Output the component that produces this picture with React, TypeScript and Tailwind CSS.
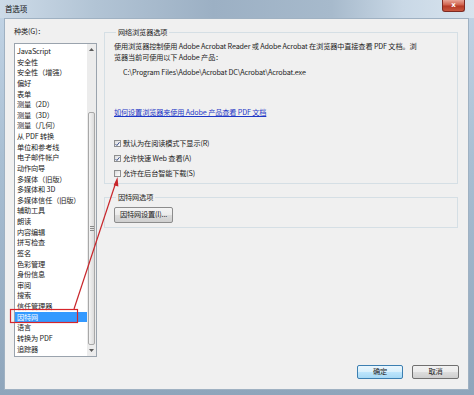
import React from "react";

const categories = [
  "JavaScript",
  "安全性",
  "安全性（增强）",
  "偏好",
  "表单",
  "测量（2D）",
  "测量（3D）",
  "测量（几何）",
  "从 PDF 转换",
  "单位和参考线",
  "电子邮件帐户",
  "动作向导",
  "多媒体（旧版）",
  "多媒体和 3D",
  "多媒体信任（旧版）",
  "辅助工具",
  "朗读",
  "内容编辑",
  "拼写检查",
  "签名",
  "色彩管理",
  "身份信息",
  "审阅",
  "搜索",
  "信任管理器",
  "因特网",
  "语言",
  "转换为 PDF",
  "追踪器",
];

const Checkbox: React.FC<{ label: string; checked?: boolean }> = ({
  label,
  checked = false,
}) => (
  <div className="h-[15px] flex items-center gap-[2px]">
    <span className="w-[7px] h-[7px] border border-[#8e8f8f] bg-[linear-gradient(135deg,#dcdcdc,#ffffff)] flex items-center justify-center">
      {checked && (
        <svg width="6" height="6" viewBox="0 0 6 6">
          <path d="M0.6 3.1 L2.3 4.8 L5.4 0.8" fill="none" stroke="#3a4f86" strokeWidth="1.2" />
        </svg>
      )}
    </span>
    <span>{label}</span>
  </div>
);

const Triangle: React.FC<{ down?: boolean }> = ({ down = false }) => (
  <svg width="5" height="3" viewBox="0 0 5 3">
    <path d={down ? "M0 0 H5 L2.5 3 Z" : "M0 3 H5 L2.5 0 Z"} fill="#5b5b5b" />
  </svg>
);

const App: React.FC = () => {
  return (
    <div className="relative w-[474px] h-[395px] overflow-hidden flex flex-col bg-[linear-gradient(180deg,#c3d5e6_0%,#a9bfd3_40%,#8ea5bb_100%)] font-['Noto_Sans_CJK_SC',sans-serif] text-[7.2px] tracking-[-0.15px] text-[#222]">
      {/* Title bar */}
      <div className="h-[18px] flex items-start justify-between pl-[5px] pr-[9px] bg-[linear-gradient(90deg,#cddbe8_0%,#b2c4d5_20%,#9cb0c4_45%,#a7bacc_70%,#c9d8e6_85%,#d8e4ee_100%)]">
        <span className="leading-[18px] text-[7.5px] text-[#111]">首选项</span>
        <div className="w-[23px] h-[12px] rounded-b-[3px] border border-t-0 border-[#7d2a22] bg-[linear-gradient(180deg,#e8a597_0%,#d0614c_45%,#b53a26_55%,#c9573f_100%)] flex items-center justify-center">
          <span className="text-white text-[7px] font-bold leading-none font-['DejaVu_Sans',sans-serif]">x</span>
        </div>
      </div>

      {/* Client area */}
      <div className="flex-1 flex pl-[4px] pr-[5px] pb-[5px]">
        <div className="flex-1 flex flex-col bg-[#f0f0f0] border border-[#9fb1c2]">
          <div className="flex pt-[5px]">
            {/* Categories */}
            <div className="ml-[9px] w-[83px] flex flex-col">
              <div className="h-[19px] leading-[15px]">种类(G)：</div>
              <div className="h-[314px] border border-[#9aa3ad] bg-white flex">
                <ul className="flex-1 pt-[2px]">
                  {categories.map((c) => (
                    <li
                      key={c}
                      className={`h-[10.63px] leading-[10.63px] pl-[2px] whitespace-nowrap ${
                        c === "因特网" ? "bg-[#3399ff] text-white" : ""
                      }`}
                    >
                      {c}
                    </li>
                  ))}
                </ul>
                {/* Scrollbar */}
                <div className="w-[9px] flex flex-col bg-[#ececec]">
                  <div className="h-[10px] flex items-center justify-center">
                    <Triangle />
                  </div>
                  <div className="flex-1 pt-[58px]">
                    <div className="h-[233px] mx-[1px] rounded-[2px] border border-[#a8a8a8] bg-[linear-gradient(90deg,#f4f4f4,#dcdcdc)] flex items-center justify-center">
                      <div className="flex flex-col gap-[1px]">
                        <div className="w-[4px] h-px bg-[#8a8a8a]" />
                        <div className="w-[4px] h-px bg-[#8a8a8a]" />
                        <div className="w-[4px] h-px bg-[#8a8a8a]" />
                      </div>
                    </div>
                  </div>
                  <div className="h-[11px] flex items-center justify-center pb-[1px]">
                    <Triangle down />
                  </div>
                </div>
              </div>
            </div>

            {/* Settings panel */}
            <div className="ml-[7px] w-[354px] flex flex-col">
              <fieldset className="border border-[#d5dfe5] pl-[9px] pb-[2px]">
                <legend className="ml-[2px] px-[2px] leading-[16px]">网络浏览器选项</legend>
                <div className="pt-[1px] leading-[11px] whitespace-nowrap">
                  <div>使用浏览器控制使用 Adobe Acrobat Reader 或 Adobe Acrobat 在浏览器中直接查看 PDF 文档。浏</div>
                  <div>览器当前可使用以下 Adobe 产品：</div>
                </div>
                <div className="mt-[4px] pl-[9px] leading-[11px]">
                  C:\Program Files\Adobe\Acrobat DC\Acrobat\Acrobat.exe
                </div>
                <div className="mt-[29px] leading-[11px] text-[#1c36c6] underline">
                  如何设置浏览器来使用 Adobe 产品查看 PDF 文档
                </div>
                <div className="mt-[18px]">
                  <Checkbox label="默认为在阅读模式下显示(R)" checked />
                  <Checkbox label="允许快速 Web 查看(A)" checked />
                  <Checkbox label="允许在后台智能下载(S)" />
                </div>
              </fieldset>

              <fieldset className="mt-[5px] border border-[#d5dfe5] pl-[9px] pb-[4px]">
                <legend className="ml-[2px] px-[2px] leading-[16px]">因特网选项</legend>
                <button className="mt-[2px] w-[59px] h-[16px] rounded-[2px] border border-[#8c8c8c] bg-[linear-gradient(180deg,#f4f4f4_0%,#ebebeb_50%,#dcdcdc_51%,#cfcfcf_100%)] leading-none">
                  因特网设置(I)...
                </button>
              </fieldset>
            </div>
          </div>

          {/* Dialog buttons */}
          <div className="mt-[8px] flex justify-end gap-[9px] pr-[9px]">
            <button className="w-[46px] h-[14px] rounded-[2px] border border-[#3c7fb1] bg-[linear-gradient(180deg,#eaf6fd_0%,#d9f0fc_50%,#bee6fd_51%,#a7d9f5_100%)] leading-none">
              确定
            </button>
            <button className="w-[47px] h-[14px] rounded-[2px] border border-[#707070] bg-[linear-gradient(180deg,#f2f2f2_0%,#ebebeb_50%,#dddddd_51%,#cfcfcf_100%)] leading-none">
              取消
            </button>
          </div>
        </div>
      </div>

      {/* Red annotation */}
      <svg className="absolute inset-0 pointer-events-none" width="474" height="395">
        <rect x="10.5" y="309.5" width="67" height="13" fill="none" stroke="#d6252b" strokeWidth="1.2" />
        <line x1="74" y1="309" x2="116" y2="182" stroke="#c8262b" strokeWidth="1.2" />
        <path d="M117.5 177 L113.6 185.2 L118.4 186.4 Z" fill="#c8262b" />
      </svg>
    </div>
  );
};

export default App;
